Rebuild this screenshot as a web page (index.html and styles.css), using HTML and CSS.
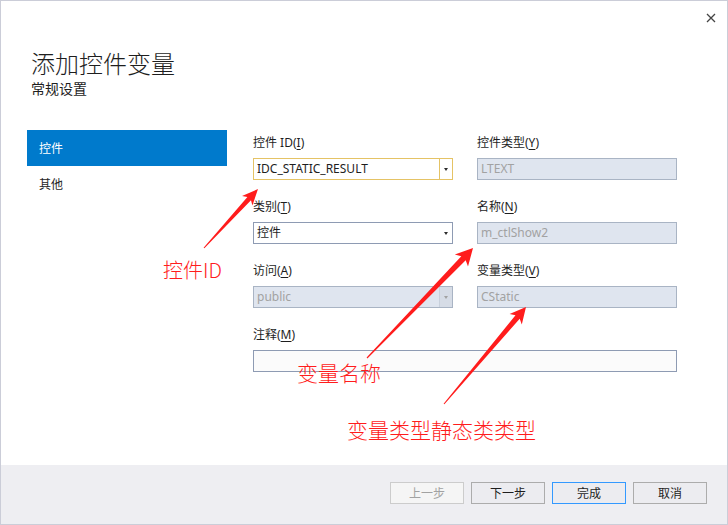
FILE: index.html
```html
<!DOCTYPE html>
<html lang="zh-CN">
<head>
<meta charset="utf-8">
<title>添加控件变量</title>
<link rel="stylesheet" href="styles.css">
</head>
<body>
<div class="window">
  <div class="titlebar">
    <svg class="close" width="10" height="10" viewBox="0 0 10 10"><path d="M1 1 L9 9 M9 1 L1 9" stroke="#444" stroke-width="1.3" fill="none"/></svg>
  </div>
  <div class="header">
    <div class="title">添加控件变量</div>
    <div class="subtitle">常规设置</div>
  </div>
  <div class="body">
    <nav class="nav">
      <div class="nav-item active">控件</div>
      <div class="nav-item">其他</div>
    </nav>
    <div class="form">
      <div class="field">
        <div class="label">控件 ID(<u>I</u>)</div>
        <div class="combo focus"><span class="value">IDC_STATIC_RESULT</span><span class="drop sep"><i class="tri"></i></span></div>
      </div>
      <div class="field">
        <div class="label">控件类型(<u>Y</u>)</div>
        <div class="textbox disabled">LTEXT</div>
      </div>
      <div class="field">
        <div class="label">类别(<u>T</u>)</div>
        <div class="combo"><span class="value">控件</span><span class="drop"><i class="tri"></i></span></div>
      </div>
      <div class="field">
        <div class="label">名称(<u>N</u>)</div>
        <div class="textbox disabled">m_ctlShow2</div>
      </div>
      <div class="field">
        <div class="label">访问(<u>A</u>)</div>
        <div class="combo disabled"><span class="value">public</span><span class="drop sep"><i class="tri"></i></span></div>
      </div>
      <div class="field">
        <div class="label">变量类型(<u>V</u>)</div>
        <div class="textbox disabled">CStatic</div>
      </div>
      <div class="field wide">
        <div class="label">注释(<u>M</u>)</div>
        <div class="textbox note"></div>
      </div>
    </div>
  </div>
  <div class="footer">
    <button class="btn" disabled>上一步</button>
    <button class="btn">下一步</button>
    <button class="btn default">完成</button>
    <button class="btn">取消</button>
  </div>

  <svg class="arrows" width="728" height="525" viewBox="0 0 728 525">
    <polygon fill="#ff1c1c" points="203.6,247.7 247.4,196.9 242.0,196.1 258,189 252.4,205.5 251.0,200.3 204.4,248.3"/>
    <polygon fill="#ff1c1c" points="366.6,357.6 461.3,256.2 454.8,254.4 473,248 468.0,266.6 465.7,260.3 367.4,358.4"/>
    <polygon fill="#ff1c1c" points="443.6,403.7 515.5,315.2 509.6,314.1 526,307 521.8,324.4 519.7,318.7 444.4,404.3"/>
  </svg>
  <div class="annot annot-id">控件ID</div>
  <div class="annot annot-name">变量名称</div>
  <div class="annot annot-type">变量类型静态类类型</div>
</div>
</body>
</html>
```
FILE: styles.css
```css
* { box-sizing: border-box; }
html, body { margin: 0; padding: 0; background: #ffffff; }
body {
  font-family: "Noto Sans", "Noto Sans CJK SC", sans-serif;
  font-size: 12px;
  color: #1e1e1e;
}
.window {
  position: relative;
  width: 728px;
  height: 525px;
  border: 1px solid #cbcdd8;
  background: #ffffff;
  display: flex;
  flex-direction: column;
}
.titlebar {
  height: 30px;
  display: flex;
  justify-content: flex-end;
  align-items: flex-start;
  padding: 12px 11px 0 0;
}
.close { display: block; }
.header { padding-left: 30px; }
.title {
  margin-top: 19px;
  font-family: "Liberation Sans", "Noto Sans CJK SC", sans-serif;
  font-weight: 300;
  font-size: 24px;
  line-height: 30px;
  color: #1e1e1e;
}
.subtitle {
  margin-top: 1px;
  font-family: "Liberation Sans", "Noto Sans CJK SC", sans-serif;
  font-size: 14px;
  line-height: 16px;
  color: #1e1e1e;
}
.body {
  margin-top: 33px;
  display: flex;
  gap: 26px;
  padding-left: 26px;
}
.nav { width: 200px; display: flex; flex-direction: column; }
.nav-item {
  height: 36px;
  line-height: 36px;
  padding-left: 12px;
  font-family: "Noto Sans CJK SC", sans-serif;
  font-size: 12px;
  color: #1e1e1e;
}
.nav-item.active { background: #007acc; color: #ffffff; }
.form {
  padding-top: 5px;
  display: grid;
  grid-template-columns: 200px 200px;
  column-gap: 24px;
  row-gap: 19px;
  align-content: start;
}
.field { display: flex; flex-direction: column; gap: 7px; }
.field.wide { grid-column: 1 / span 2; }
.label {
  height: 16px;
  line-height: 16px;
  font-size: 12px;
  color: #1e1e1e;
}
.label u { text-underline-offset: 2px; }
.combo, .textbox {
  height: 22px;
  border: 1px solid #8e9bb3;
  background: #ffffff;
  display: flex;
  align-items: center;
  font-size: 12px;
  line-height: 20px;
  color: #1e1e1e;
}
.textbox { padding-left: 3px; }
.combo .value { flex: 1; padding-left: 3px; }
.combo.focus { border-color: #e5c365; }
.drop {
  width: 13px;
  height: 100%;
  display: flex;
  align-items: center;
  justify-content: center;
}
.drop.sep { border-left: 1px solid #e5c365; }
.tri {
  width: 0; height: 0;
  border-left: 2.5px solid transparent;
  border-right: 2.5px solid transparent;
  border-top: 3px solid #2d2d2d;
}
.disabled {
  background: #dfe5ef;
  border-color: #a9b4c4;
  color: #a2a2a2;
}
.combo.disabled .drop.sep { border-left-color: #c8d0dc; background: #d6dce6; }
.combo.disabled .tri { border-top-color: #a2a2a2; }
.textbox.note { background: #fbfbfb; border-color: #8e9bb3; }

.footer {
  margin-top: auto;
  height: 59px;
  background: #eeeef2;
  display: flex;
  justify-content: flex-end;
  align-items: flex-start;
  gap: 7px;
  padding: 17px 20px 0 0;
}
.btn {
  width: 74px;
  height: 22px;
  border: 1px solid #acacac;
  background: #ececf0;
  font-family: "Noto Sans CJK SC", sans-serif;
  font-size: 12px;
  color: #1e1e1e;
  padding: 0;
  line-height: 20px;
}
.btn:disabled { background: #f5f5f5; border-color: #cccccc; color: #a2a2a2; }
.btn.default { border-color: #3399ff; }

.arrows { position: absolute; left: -1px; top: -1px; pointer-events: none; }
.annot {
  position: absolute;
  font-family: "Noto Sans CJK SC", sans-serif;
  font-weight: 300;
  color: #ff1c1c;
  line-height: 1;
  white-space: nowrap;
}
.annot-id { left: 162px; top: 259px; font-size: 20px; }
.annot-name { left: 296px; top: 361px; font-size: 21px; }
.annot-type { left: 346px; top: 418px; font-size: 21px; }
```
